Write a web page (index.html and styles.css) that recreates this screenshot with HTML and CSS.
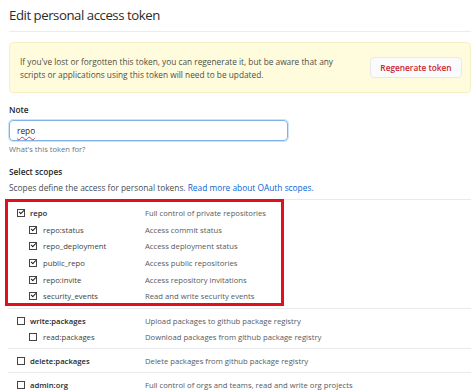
FILE: index.html
```html
<!DOCTYPE html>
<html lang="en">
<head>
    <meta charset="UTF-8">
    <title>Edit personal access token</title>
    <link rel="stylesheet" href="styles.css">
</head>
<body>
    <div class="page">
        <h1 class="page-title">Edit personal access token</h1>

        <div class="flash">
            <p class="flash-text">If you've lost or forgotten this token, you can regenerate it, but be aware that any scripts or applications using this token will need to be updated.</p>
            <button class="btn-regenerate">Regenerate token</button>
        </div>

        <div class="form-group">
            <label class="form-label">Note</label>
            <div class="input"><span class="typo">repo</span></div>
            <p class="hint">What's this token for?</p>
        </div>

        <div class="form-group">
            <label class="form-label">Select scopes</label>
            <p class="scopes-note">Scopes define the access for personal tokens. <a href="#">Read more about OAuth scopes.</a></p>
        </div>

        <div class="scopes">
            <div class="highlight"></div>

            <div class="scope-group first">
                <div class="scope-row parent">
                    <span class="check on"></span><span class="scope-name">repo</span>
                    <span class="scope-desc">Full control of private repositories</span>
                </div>
                <div class="scope-row child">
                    <span class="check on"></span><span class="scope-name">repo:status</span>
                    <span class="scope-desc">Access commit status</span>
                </div>
                <div class="scope-row child">
                    <span class="check on"></span><span class="scope-name">repo_deployment</span>
                    <span class="scope-desc">Access deployment status</span>
                </div>
                <div class="scope-row child">
                    <span class="check on"></span><span class="scope-name">public_repo</span>
                    <span class="scope-desc">Access public repositories</span>
                </div>
                <div class="scope-row child">
                    <span class="check on"></span><span class="scope-name">repo:invite</span>
                    <span class="scope-desc">Access repository invitations</span>
                </div>
                <div class="scope-row child">
                    <span class="check on"></span><span class="scope-name">security_events</span>
                    <span class="scope-desc">Read and write security events</span>
                </div>
            </div>

            <div class="scope-group">
                <div class="scope-row parent">
                    <span class="check"></span><span class="scope-name">write:packages</span>
                    <span class="scope-desc">Upload packages to github package registry</span>
                </div>
                <div class="scope-row child">
                    <span class="check"></span><span class="scope-name">read:packages</span>
                    <span class="scope-desc">Download packages from github package registry</span>
                </div>
            </div>

            <div class="scope-group">
                <div class="scope-row parent">
                    <span class="check"></span><span class="scope-name">delete:packages</span>
                    <span class="scope-desc">Delete packages from github package registry</span>
                </div>
            </div>

            <div class="scope-group">
                <div class="scope-row parent">
                    <span class="check"></span><span class="scope-name">admin:org</span>
                    <span class="scope-desc">Full control of orgs and teams, read and write org projects</span>
                </div>
            </div>
        </div>
    </div>
</body>
</html>
```

FILE: styles.css
```css
* {
    margin: 0;
    padding: 0;
    box-sizing: border-box;
}

body {
    font-family: "Open Sans", "Noto Sans", sans-serif;
    color: #24292e;
    background: #fff;
    overflow: hidden;
}

.page {
    padding-left: 9px;
    width: 471px;
}

.page-title {
    font-size: 13.2px;
    font-weight: 400;
    letter-spacing: -0.45px;
    line-height: 20px;
    padding-top: 5px;
    padding-bottom: 6px;
    border-bottom: 1px solid #eaecef;
    color: #2b2b2b;
}

.flash {
    margin-top: 10px;
    height: 51px;
    background: #fffbdd;
    border: 1px solid #f7f0c6;
    border-radius: 4px;
    display: flex;
    align-items: center;
    justify-content: space-between;
    padding: 0 8px 0 10px;
}

.flash-text {
    font-size: 8.3px;
    line-height: 13px;
    color: #4e4e44;
    width: 325px;
}

.btn-regenerate {
    font-family: inherit;
    font-size: 8.3px;
    font-weight: 600;
    color: #cb2431;
    background: #fafbfc;
    border: 1px solid #e8e8e4;
    border-radius: 4px;
    width: 92px;
    height: 21px;
    white-space: nowrap;
}

.form-group {
    margin-top: 10px;
}

.form-label {
    display: block;
    font-size: 8.3px;
    font-weight: 600;
    line-height: 14px;
}

.input {
    margin-top: 3px;
    width: 279px;
    height: 21px;
    border: 1px solid #7eb2ea;
    border-radius: 4px;
    box-shadow: 0 0 0 1px #cfe2f7;
    font-size: 8.3px;
    line-height: 19px;
    padding-left: 7px;
}

.typo {
    text-decoration: underline wavy #d73a49;
    text-underline-offset: 2px;
    text-decoration-thickness: 1px;
}

.hint {
    font-size: 7.6px;
    color: #6a737d;
    margin-top: 2px;
    line-height: 12px;
}

.scopes-note {
    font-size: 8.35px;
    line-height: 14px;
    color: #444d56;
    margin-top: 2px;
}

.scopes-note a {
    color: #0366d6;
    text-decoration: none;
}

.scopes {
    position: relative;
    margin-top: 4px;
    margin-left: -1px;
}

/* red annotation drawn over the repo group */
.highlight {
    position: absolute;
    left: -3px;
    top: 0;
    width: 279px;
    height: 107px;
    border: 3px solid #e0101e;
    pointer-events: none;
}

.scope-group {
    border-top: 1px solid #e8eaed;
    padding: 4px 0 3px;
}

.scope-group.first {
    padding-top: 5px;
}

.scope-row {
    display: flex;
    align-items: center;
    height: 16px;
    font-size: 7.7px;
}

.first .scope-row {
    height: 16.6px;
}

.scope-row.parent {
    padding-left: 9px;
}

.scope-row.child {
    padding-left: 21px;
}

.scope-name {
    margin-left: 5px;
    color: #24292e;
}

.parent .scope-name {
    font-weight: 600;
    width: 115px;
}

.child .scope-name {
    margin-left: 6px;
    width: 102px;
    color: #3a3f44;
}

.scope-desc {
    color: #555b61;
}

.check {
    width: 8px;
    height: 8px;
    border: 1px solid #444;
    position: relative;
    flex-shrink: 0;
}

.check.on::after {
    content: "";
    position: absolute;
    left: 1px;
    top: 0;
    width: 4px;
    height: 2px;
    border-left: 1.2px solid #222;
    border-bottom: 1.2px solid #222;
    transform: rotate(-45deg);
}
```
